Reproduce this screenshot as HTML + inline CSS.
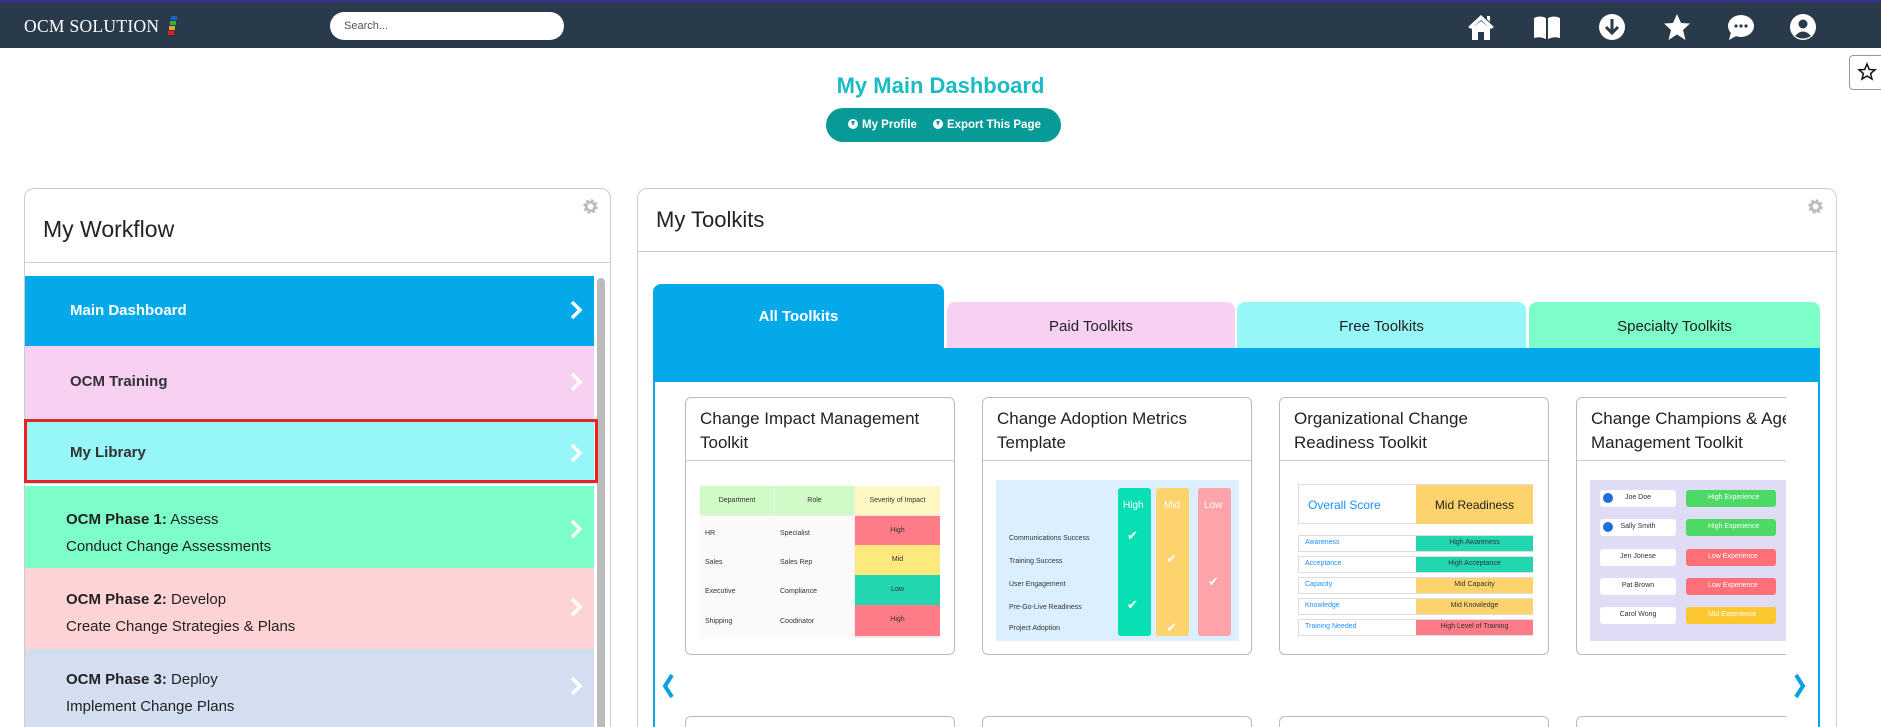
<!DOCTYPE html>
<html><head><meta charset="utf-8">
<style>
*{box-sizing:border-box;margin:0;padding:0}
html,body{width:1881px;height:727px;overflow:hidden}
body{background:#fff;font-family:"Liberation Sans",sans-serif;color:#222}
#root{position:relative;width:1881px;height:727px;overflow:hidden}
.nav{position:absolute;left:0;top:0;width:1881px;height:48px;background:#293a4a;border-top:2px solid #3b2f9a}
.logo{position:absolute;left:24px;top:14px;font-family:"Liberation Serif",serif;color:#fff;font-size:17.5px;letter-spacing:.3px}
.search{position:absolute;left:330px;top:10px;width:234px;height:28px;background:#fff;border-radius:14px;font-size:11px;color:#555;padding:8px 0 0 14px}
.ic{position:absolute;top:10px;width:30px;height:30px}
.abs{position:absolute}
.title{position:absolute;left:0;width:1881px;top:73px;text-align:center;color:#19bcc4;font-size:22px;font-weight:bold}
.btn{position:absolute;left:826px;top:108px;width:235px;height:34px;background:#079a96;border-radius:17px;color:#fff;font-size:11.5px;font-weight:bold;padding:11px 0 0 22px}
.panel{position:absolute;border:1px solid #ccc;border-radius:10px;background:#fff}
.item{position:absolute;left:25px;width:569px;font-size:15px;color:#222}
.item b{font-weight:bold}
.tab{position:absolute;text-align:center;font-size:15px;border-radius:8px 8px 0 0}
.card{position:absolute;top:397px;width:270px;height:258px;border:1px solid #bbb;border-radius:6px;background:#fff;overflow:hidden}
.card h4{font-weight:normal;font-size:17px;line-height:24px;padding:9px 14px 0;height:63px;border-bottom:1px solid #ccd}
.card2{position:absolute;top:716px;width:270px;height:40px;border:1px solid #bbb;border-radius:6px;background:#fff}
.tx{font-size:7px;color:#333}
.ci{display:inline-block;width:10px;height:10px;border-radius:50%;background:#fff;vertical-align:-1px;margin-right:4px;position:relative}
.ci:after{content:"";position:absolute;left:3px;top:2px;border-left:2px solid transparent;border-right:2px solid transparent;border-top:5px solid #079a96}
</style></head><body><div id="root">
<div class="nav">
<div class="logo">OCM SOLUTION</div>
<div class="abs" style="left:171px;top:14px;width:6px;height:4px;background:#1565c0"></div>
<div class="abs" style="left:170px;top:19px;width:6px;height:4px;background:#2db34a"></div>
<div class="abs" style="left:169px;top:24px;width:6px;height:4px;background:#f3a323"></div>
<div class="abs" style="left:168px;top:29px;width:6px;height:4px;background:#e32222"></div>
<div class="search">Search...</div>
<svg class="ic" style="left:1466px" viewBox="0 0 30 30"><path d="M15 3 L2 15 L5 17 L15 8 L25 17 L28 15 Z M6 16 V28 H12 V20 H18 V28 H24 V16 L15 9 Z M21 4 H24 V10 L21 7Z" fill="#fff"/></svg>
<svg class="ic" style="left:1532px" viewBox="0 0 30 30"><path d="M2 6 Q8 3 14 6 V27 Q8 24 2 26 Z M16 6 Q22 3 28 6 V26 Q22 24 16 27 Z" fill="#fff"/></svg>
<svg class="ic" style="left:1597px" viewBox="0 0 30 30"><circle cx="15" cy="15" r="13" fill="#fff"/><path d="M15 7 V21 M9 15 L15 21 L21 15" stroke="#293a4a" stroke-width="3" fill="none"/></svg>
<svg class="ic" style="left:1662px" viewBox="0 0 30 30"><path d="M15 2 L19 11 L28 11.5 L21 18 L23.5 28 L15 22.5 L6.5 28 L9 18 L2 11.5 L11 11 Z" fill="#fff"/></svg>
<svg class="ic" style="left:1726px" viewBox="0 0 30 30"><ellipse cx="15" cy="14" rx="13" ry="11" fill="#fff"/><path d="M5 20 L3 28 L12 23Z" fill="#fff"/><circle cx="10" cy="14" r="1.6" fill="#293a4a"/><circle cx="15" cy="14" r="1.6" fill="#293a4a"/><circle cx="20" cy="14" r="1.6" fill="#293a4a"/></svg>
<svg class="ic" style="left:1788px" viewBox="0 0 30 30"><circle cx="15" cy="15" r="13" fill="#fff"/><circle cx="15" cy="12" r="4.5" fill="#293a4a"/><path d="M7 24 Q15 15 23 24 Q15 29 7 24Z" fill="#293a4a"/></svg>
</div>
<div class="abs" style="left:1849px;top:55px;width:40px;height:35px;border:1px solid #999;border-radius:4px;background:#fff"></div>
<svg class="abs" style="left:1857px;top:62px" width="20" height="20" viewBox="0 0 20 20"><path d="M10 2 L12.3 7.5 L18 7.8 L13.6 11.5 L15 17 L10 14 L5 17 L6.4 11.5 L2 7.8 L7.7 7.5 Z" fill="none" stroke="#111" stroke-width="1.5"/></svg>

<div class="title">My Main Dashboard</div>
<div class="btn"><span class="ci"></span>My Profile &nbsp;&nbsp;&nbsp; <span class="ci"></span>Export This Page</div>

<div class="panel" style="left:24px;top:188px;width:587px;height:580px"></div>
<svg class="abs" style="left:582px;top:198px" width="17" height="17" viewBox="0 0 20 20"><circle cx="10" cy="10" r="6.5" fill="none" stroke="#bbb" stroke-width="4" stroke-dasharray="3 2.1"/><circle cx="10" cy="10" r="5" fill="none" stroke="#bbb" stroke-width="3"/></svg>
<div class="abs" style="left:43px;top:216px;font-size:23px;color:#222">My Workflow</div>
<div class="abs" style="left:25px;top:262px;width:585px;height:1px;background:#ccc"></div>
<div class="abs" style="left:597px;top:278px;width:8px;height:460px;background:#bbb;border-radius:4px"></div>

<div class="item" style="top:276px;height:70px;background:#03a9e8;color:#fff"><b style="position:absolute;left:45px;top:26px">Main Dashboard</b></div>
<div class="item" style="top:346px;height:72px;background:#f8d0f1"><b style="position:absolute;left:45px;top:27px;color:#333">OCM Training</b></div>
<div class="item" style="top:418px;height:66px;background:#96f6f8;"><b style="position:absolute;left:45px;top:26px;color:#333">My Library</b></div>
<div class="abs" style="left:24px;top:419px;width:574px;height:64px;border:3px solid #f02020"></div>
<div class="item" style="top:486px;height:82px;background:#7dfdc8"><div style="position:absolute;left:41px;top:20px;line-height:27px"><b>OCM Phase 1:</b> Assess<br>Conduct Change Assessments</div></div>
<div class="item" style="top:568px;height:81px;background:#fed3d6"><div style="position:absolute;left:41px;top:18px;line-height:27px"><b>OCM Phase 2:</b> Develop<br>Create Change Strategies &amp; Plans</div></div>
<div class="item" style="top:649px;height:90px;background:#d3dff0"><div style="position:absolute;left:41px;top:17px;line-height:27px"><b>OCM Phase 3:</b> Deploy<br>Implement Change Plans</div></div>
<svg class="abs" style="left:569px;top:299px" width="14" height="22"><path d="M3 3 L11 11 L3 19" stroke="#fff" stroke-width="3.5" fill="none"/></svg>
<svg class="abs" style="left:569px;top:371px" width="14" height="22"><path d="M3 3 L11 11 L3 19" stroke="#fff" stroke-width="3.5" fill="none"/></svg>
<svg class="abs" style="left:569px;top:442px" width="14" height="22"><path d="M3 3 L11 11 L3 19" stroke="#fff" stroke-width="3.5" fill="none"/></svg>
<svg class="abs" style="left:569px;top:518px" width="14" height="22"><path d="M3 3 L11 11 L3 19" stroke="#fff" stroke-width="3.5" fill="none"/></svg>
<svg class="abs" style="left:569px;top:596px" width="14" height="22"><path d="M3 3 L11 11 L3 19" stroke="#fff" stroke-width="3.5" fill="none"/></svg>
<svg class="abs" style="left:569px;top:675px" width="14" height="22"><path d="M3 3 L11 11 L3 19" stroke="#fff" stroke-width="3.5" fill="none"/></svg>

<div class="panel" style="left:637px;top:188px;width:1200px;height:580px"></div>
<svg class="abs" style="left:1807px;top:198px" width="17" height="17" viewBox="0 0 20 20"><circle cx="10" cy="10" r="6.5" fill="none" stroke="#bbb" stroke-width="4" stroke-dasharray="3 2.1"/><circle cx="10" cy="10" r="5" fill="none" stroke="#bbb" stroke-width="3"/></svg>
<div class="abs" style="left:656px;top:207px;font-size:22px;color:#222">My Toolkits</div>
<div class="abs" style="left:638px;top:251px;width:1198px;height:1px;background:#ccc"></div>

<div class="tab" style="left:653px;top:284px;width:291px;height:66px;background:#03a9e8;color:#fff;font-weight:bold;padding-top:24px">All Toolkits</div>
<div class="tab" style="left:947px;top:302px;width:288px;height:48px;background:#f8d0f1;padding-top:16px">Paid Toolkits</div>
<div class="tab" style="left:1237px;top:302px;width:289px;height:48px;background:#96f6f8;padding-top:16px">Free Toolkits</div>
<div class="tab" style="left:1529px;top:302px;width:291px;height:48px;background:#7dfdc8;padding-top:16px">Specialty Toolkits</div>
<div class="abs" style="left:653px;top:348px;width:1167px;height:34px;background:#03a9e8"></div>
<div class="abs" style="left:653px;top:382px;width:1167px;height:345px;border-left:2px solid #03a9e8;border-right:2px solid #03a9e8"></div>

<div class="abs" style="left:680px;top:390px;width:1106px;height:337px;overflow:hidden">
<div class="card" style="left:5px;top:7px"><h4>Change Impact Management Toolkit</h4>
 <div class="abs" style="left:14px;top:88px;width:240px;height:152px;background:#eee">
  <div class="abs tx" style="left:0;top:0;width:74px;height:29px;background:#d0fbc6;text-align:center;padding-top:11px">Department</div>
  <div class="abs tx" style="left:75px;top:0;width:79px;height:29px;background:#d0fbc6;text-align:center;padding-top:11px">Role</div>
  <div class="abs tx" style="left:155px;top:0;width:85px;height:29px;background:#fdf8c2;text-align:center;padding-top:11px">Severity of Impact</div>
  <div class="abs" style="left:0;top:30px;width:154px;height:122px;background:#fafafa"></div>
  <div class="abs tx" style="left:5px;top:44px">HR</div><div class="abs tx" style="left:80px;top:44px">Specialist</div>
  <div class="abs tx" style="left:5px;top:73px">Sales</div><div class="abs tx" style="left:80px;top:73px">Sales Rep</div>
  <div class="abs tx" style="left:5px;top:102px">Executive</div><div class="abs tx" style="left:80px;top:102px">Compliance</div>
  <div class="abs tx" style="left:5px;top:132px">Shipping</div><div class="abs tx" style="left:80px;top:132px">Coodinator</div>
  <div class="abs tx" style="left:155px;top:30px;width:85px;height:29px;background:#fe7b88;text-align:center;padding-top:11px">High</div>
  <div class="abs tx" style="left:155px;top:59px;width:85px;height:30px;background:#fde97e;text-align:center;padding-top:11px">Mid</div>
  <div class="abs tx" style="left:155px;top:89px;width:85px;height:30px;background:#22d6b0;text-align:center;padding-top:11px">Low</div>
  <div class="abs tx" style="left:155px;top:119px;width:85px;height:31px;background:#fe7b88;text-align:center;padding-top:11px">High</div>
 </div></div>
<div class="card" style="left:302px;top:7px"><h4>Change Adoption Metrics Template</h4>
 <div class="abs" style="left:13px;top:82px;width:243px;height:161px;background:#dcefff;overflow:hidden">
  <div class="abs" style="left:122px;top:8px;width:33px;height:148px;background:#08e0b3;border-radius:3px"></div>
  <div class="abs" style="left:160px;top:8px;width:33px;height:148px;background:#fdd36d;border-radius:3px"></div>
  <div class="abs" style="left:202px;top:8px;width:33px;height:148px;background:#fea3aa;border-radius:3px"></div>
  <div class="abs" style="left:127px;top:20px;font-size:10px;color:#fff">High</div>
  <div class="abs" style="left:168px;top:20px;font-size:10px;color:#fff">Mid</div>
  <div class="abs" style="left:208px;top:20px;font-size:10px;color:#fff">Low</div>
  <div class="abs tx" style="left:13px;top:55px">Communications Success</div>
  <div class="abs tx" style="left:13px;top:78px">Training Success</div>
  <div class="abs tx" style="left:13px;top:101px">User Engagement</div>
  <div class="abs tx" style="left:13px;top:124px">Pre-Go-Live Readiness</div>
  <div class="abs tx" style="left:13px;top:145px">Project Adoption</div>
  <div class="abs" style="left:131px;top:48px;color:#fff;font-size:13px">&#10004;</div>
  <div class="abs" style="left:170px;top:71px;color:#fff;font-size:13px">&#10004;</div>
  <div class="abs" style="left:212px;top:94px;color:#fff;font-size:13px">&#10004;</div>
  <div class="abs" style="left:131px;top:117px;color:#fff;font-size:13px">&#10004;</div>
  <div class="abs" style="left:170px;top:140px;color:#fff;font-size:13px">&#10004;</div>
 </div></div>
<div class="card" style="left:599px;top:7px"><h4>Organizational Change Readiness Toolkit</h4>
 <div class="abs" style="left:18px;top:86px;width:235px;height:40px;border:1px solid #ddd;background:#fff">
  <div class="abs" style="left:9px;top:13px;font-size:12px;color:#1e90ff">Overall Score</div>
  <div class="abs" style="left:117px;top:0;width:117px;height:39px;background:#fdd36d;font-size:12px;text-align:center;padding-top:13px">Mid Readiness</div></div>
 <div class="abs" style="left:18px;top:137px;width:235px">
  <div style="height:17px;margin-bottom:4px;border:1px solid #ddd;position:relative"><span class="abs tx" style="left:6px;top:3px;color:#1e90ff">Awareness</span><span class="abs tx" style="left:117px;top:0;width:117px;height:15px;background:#22d6b0;text-align:center;padding-top:3px">High Awareness</span></div>
  <div style="height:17px;margin-bottom:4px;border:1px solid #ddd;position:relative"><span class="abs tx" style="left:6px;top:3px;color:#1e90ff">Acceptance</span><span class="abs tx" style="left:117px;top:0;width:117px;height:15px;background:#22d6b0;text-align:center;padding-top:3px">High Acceptance</span></div>
  <div style="height:17px;margin-bottom:4px;border:1px solid #ddd;position:relative"><span class="abs tx" style="left:6px;top:3px;color:#1e90ff">Capacity</span><span class="abs tx" style="left:117px;top:0;width:117px;height:15px;background:#fdd36d;text-align:center;padding-top:3px">Mid Capacity</span></div>
  <div style="height:17px;margin-bottom:4px;border:1px solid #ddd;position:relative"><span class="abs tx" style="left:6px;top:3px;color:#1e90ff">Knowledge</span><span class="abs tx" style="left:117px;top:0;width:117px;height:15px;background:#fdd36d;text-align:center;padding-top:3px">Mid Knowledge</span></div>
  <div style="height:17px;border:1px solid #ddd;position:relative"><span class="abs tx" style="left:6px;top:3px;color:#1e90ff">Training Needed</span><span class="abs tx" style="left:117px;top:0;width:117px;height:15px;background:#fe7b88;text-align:center;padding-top:3px">High Level of Training</span></div>
 </div></div>
<div class="card" style="left:896px;top:7px;width:280px"><h4 style="white-space:nowrap">Change Champions &amp; Agent<br>Management Toolkit</h4>
 <div class="abs" style="left:13px;top:82px;width:240px;height:161px;background:#e1dcf5">
  <div class="abs tx" style="left:10px;top:10px;width:76px;height:17px;background:#fff;border-radius:3px;text-align:center;padding-top:4px">Joe Doe</div>
  <div class="abs tx" style="left:10px;top:39px;width:76px;height:17px;background:#fff;border-radius:3px;text-align:center;padding-top:4px">Sally Smith</div>
  <div class="abs tx" style="left:10px;top:69px;width:76px;height:17px;background:#fff;border-radius:3px;text-align:center;padding-top:4px">Jen Jonese</div>
  <div class="abs tx" style="left:10px;top:98px;width:76px;height:17px;background:#fff;border-radius:3px;text-align:center;padding-top:4px">Pat Brown</div>
  <div class="abs tx" style="left:10px;top:127px;width:76px;height:17px;background:#fff;border-radius:3px;text-align:center;padding-top:4px">Carol Wong</div>
  <div class="abs tx" style="left:96px;top:10px;width:90px;height:17px;background:#4cd964;color:#fff;border-radius:3px;padding:4px 0 0 22px;white-space:nowrap">High Experience</div>
  <div class="abs tx" style="left:96px;top:39px;width:90px;height:17px;background:#4cd964;color:#fff;border-radius:3px;padding:4px 0 0 22px;white-space:nowrap">High Experience</div>
  <div class="abs tx" style="left:96px;top:69px;width:90px;height:17px;background:#fe6f78;color:#fff;border-radius:3px;padding:4px 0 0 22px;white-space:nowrap">Low Experience</div>
  <div class="abs tx" style="left:96px;top:98px;width:90px;height:17px;background:#fe6f78;color:#fff;border-radius:3px;padding:4px 0 0 22px;white-space:nowrap">Low Experience</div>
  <div class="abs tx" style="left:96px;top:127px;width:90px;height:17px;background:#fdc72f;color:#fff;border-radius:3px;padding:4px 0 0 22px;white-space:nowrap">Mid Experience</div>
  <div class="abs" style="left:13px;top:13px;width:10px;height:10px;border-radius:50%;background:#1e6fd9"></div>
  <div class="abs" style="left:13px;top:42px;width:10px;height:10px;border-radius:50%;background:#1e6fd9"></div>
 </div></div>
<div class="card2" style="left:5px;top:326px"></div>
<div class="card2" style="left:302px;top:326px"></div>
<div class="card2" style="left:599px;top:326px"></div>
<div class="card2" style="left:896px;top:326px;width:280px"></div>
</div>
<svg class="abs" style="left:661px;top:672px" width="14" height="28"><path d="M11 3 L4 14 L11 25" stroke="#0aa0e6" stroke-width="4" fill="none"/></svg>
<svg class="abs" style="left:1793px;top:672px" width="14" height="28"><path d="M3 3 L10 14 L3 25" stroke="#0aa0e6" stroke-width="4" fill="none"/></svg>
</div></body></html>
